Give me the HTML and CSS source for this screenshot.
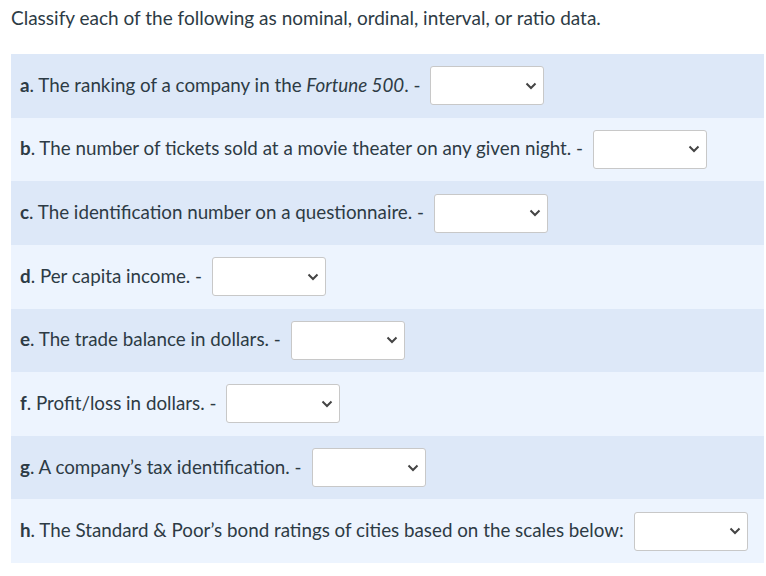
FILE: index.html
```html
<!DOCTYPE html>
<html>
<head>
<meta charset="utf-8">
<link rel="stylesheet" href="styles.css">
</head>
<body>
<p class="title">Classify each of the following as nominal, ordinal, interval, or ratio data.</p>
<div class="list">
  <div class="row dark"><span class="q"><b>a</b>. The ranking of a company in the <i>Fortune 500</i>. -</span><span class="sel"><svg width="12" height="8" viewBox="0 0 12 8"><path d="M1.5 1.5 L6 6 L10.5 1.5" fill="none" stroke="#444" stroke-width="2"/></svg></span></div>
  <div class="row light"><span class="q"><b>b</b>. The number of tickets sold at a movie theater on any given night. -</span><span class="sel"><svg width="12" height="8" viewBox="0 0 12 8"><path d="M1.5 1.5 L6 6 L10.5 1.5" fill="none" stroke="#444" stroke-width="2"/></svg></span></div>
  <div class="row dark"><span class="q"><b>c</b>. The identification number on a questionnaire. -</span><span class="sel"><svg width="12" height="8" viewBox="0 0 12 8"><path d="M1.5 1.5 L6 6 L10.5 1.5" fill="none" stroke="#444" stroke-width="2"/></svg></span></div>
  <div class="row light"><span class="q"><b>d</b>. Per capita income. -</span><span class="sel"><svg width="12" height="8" viewBox="0 0 12 8"><path d="M1.5 1.5 L6 6 L10.5 1.5" fill="none" stroke="#444" stroke-width="2"/></svg></span></div>
  <div class="row dark"><span class="q"><b>e</b>. The trade balance in dollars. -</span><span class="sel"><svg width="12" height="8" viewBox="0 0 12 8"><path d="M1.5 1.5 L6 6 L10.5 1.5" fill="none" stroke="#444" stroke-width="2"/></svg></span></div>
  <div class="row light"><span class="q"><b>f</b>. Profit/loss in dollars. -</span><span class="sel"><svg width="12" height="8" viewBox="0 0 12 8"><path d="M1.5 1.5 L6 6 L10.5 1.5" fill="none" stroke="#444" stroke-width="2"/></svg></span></div>
  <div class="row dark"><span class="q"><b>g</b>. A company’s tax identification. -</span><span class="sel"><svg width="12" height="8" viewBox="0 0 12 8"><path d="M1.5 1.5 L6 6 L10.5 1.5" fill="none" stroke="#444" stroke-width="2"/></svg></span></div>
  <div class="row light"><span class="q"><b>h</b>. The Standard &amp; Poor’s bond ratings of cities based on the scales below:</span><span class="sel"><svg width="12" height="8" viewBox="0 0 12 8"><path d="M1.5 1.5 L6 6 L10.5 1.5" fill="none" stroke="#444" stroke-width="2"/></svg></span></div>
</div>
</body>
</html>
```
FILE: styles.css
```css
body {
  margin: 0;
  padding: 0 2px 0 11px;
  font-family: Lato, "Open Sans", sans-serif;
  color: #2d3b45;
  background: #fff;
}
.title {
  margin: 0;
  padding-top: 6px;
  height: 54px;
  box-sizing: border-box;
  font-size: 19px;
  line-height: 24px;
}
.list {
  display: flex;
  flex-direction: column;
}
.row {
  height: 63.625px;
  display: flex;
  align-items: center;
  padding-left: 9px;
  font-size: 18.8px;
}
.dark { background: #dde8f8; }
.light { background: #edf4fe; }
.q { white-space: nowrap; margin-bottom: 3px; }
.q b { font-weight: 700; }
.sel {
  margin-left: 10px;
  width: 114px;
  height: 39px;
  box-sizing: border-box;
  background: #fff;
  border: 1px solid #c8c8c8;
  border-radius: 3px;
  display: flex;
  align-items: center;
  justify-content: flex-end;
  padding-right: 6px;
}
.sel svg { display: block; }
```
